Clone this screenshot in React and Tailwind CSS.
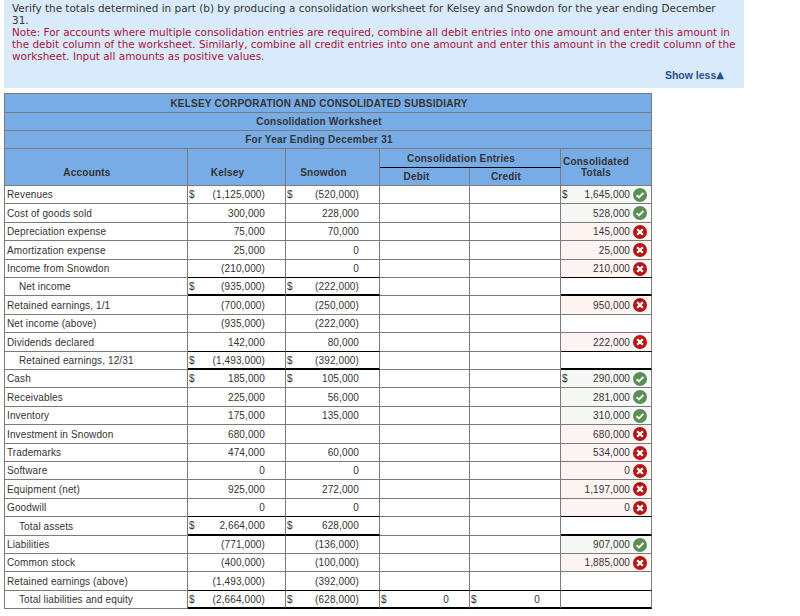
const rows = [
  { label: "Revenues", k: "(1,125,000)", s: "(520,000)", dollar: true, h: "h-[18px]", c: "1,645,000", cDollar: true, ok: true },
  { label: "Cost of goods sold", k: "300,000", s: "228,000", h: "h-[19px]", c: "528,000", ok: true },
  { label: "Depreciation expense", k: "75,000", s: "70,000", h: "h-[18px]", c: "145,000", ok: false },
  { label: "Amortization expense", k: "25,000", s: "0", h: "h-[19px]", c: "25,000", ok: false },
  { label: "Income from Snowdon", k: "(210,000)", s: "0", h: "h-[18px]", c: "210,000", ok: false },
  { label: "Net income", k: "(935,000)", s: "(222,000)", dollar: true, total: true, h: "h-[18px]" },
  { label: "Retained earnings, 1/1", k: "(700,000)", s: "(250,000)", h: "h-[19px]", c: "950,000", ok: false },
  { label: "Net income (above)", k: "(935,000)", s: "(222,000)", h: "h-[18px]" },
  { label: "Dividends declared", k: "142,000", s: "80,000", h: "h-[19px]", c: "222,000", ok: false },
  { label: "Retained earnings, 12/31", k: "(1,493,000)", s: "(392,000)", dollar: true, total: true, h: "h-[18px]" },
  { label: "Cash", k: "185,000", s: "105,000", dollar: true, h: "h-[18px]", c: "290,000", cDollar: true, ok: true },
  { label: "Receivables", k: "225,000", s: "56,000", h: "h-[19px]", c: "281,000", ok: true },
  { label: "Inventory", k: "175,000", s: "135,000", h: "h-[18px]", c: "310,000", ok: true },
  { label: "Investment in Snowdon", k: "680,000", s: "", h: "h-[19px]", c: "680,000", ok: false },
  { label: "Trademarks", k: "474,000", s: "60,000", h: "h-[18px]", c: "534,000", ok: false },
  { label: "Software", k: "0", s: "0", h: "h-[18px]", c: "0", ok: false },
  { label: "Equipment (net)", k: "925,000", s: "272,000", h: "h-[19px]", c: "1,197,000", ok: false },
  { label: "Goodwill", k: "0", s: "0", h: "h-[18px]", c: "0", ok: false },
  { label: "Total assets", k: "2,664,000", s: "628,000", dollar: true, total: true, h: "h-[19px]" },
  { label: "Liabilities", k: "(771,000)", s: "(136,000)", h: "h-[18px]", c: "907,000", ok: true },
  { label: "Common stock", k: "(400,000)", s: "(100,000)", h: "h-[18px]", c: "1,885,000", ok: false },
  { label: "Retained earnings (above)", k: "(1,493,000)", s: "(392,000)", h: "h-[19px]" },
  { label: "Total liabilities and equity", k: "(2,664,000)", s: "(628,000)", dollar: true, total: true, last: true, h: "h-[18px]" },
];

function StatusIcon({ ok }) {
  return (
    <svg viewBox="0 0 14 14" className="w-[14px] h-[14px] shrink-0">
      <circle cx="7" cy="7" r="7" fill={ok ? "#5c8f55" : "#b91414"} />
      {ok ? (
        <path d="M3.6 7.2 6 9.4 10.4 4.8" fill="none" stroke="#fff" strokeWidth="1.9" />
      ) : (
        <path d="M4.2 4.2 9.8 9.8M9.8 4.2 4.2 9.8" fill="none" stroke="#fff" strokeWidth="2.3" />
      )}
    </svg>
  );
}

function bottomLine(row, next) {
  if (row.total) return "border-b-2 border-b-black";
  if (next && next.total) return "border-b border-b-black";
  return "border-b border-b-[#7b7b7b]";
}

function entryLine(row, next) {
  if (row.last) return "border-b-2 border-b-black";
  if (next && next.last) return "border-b border-b-black";
  return "border-b border-b-[#7b7b7b]";
}

function MoneyCell({ value, dollar, line }) {
  return (
    <td className={`p-0 border-r border-r-[#7b7b7b] ${line}`}>
      <div className="flex justify-between pl-px pr-[20px]">
        <span>{dollar ? "$" : ""}</span>
        <span>{value}</span>
      </div>
    </td>
  );
}

export default function App() {
  return (
    <div className="w-[800px] h-[616px] bg-white overflow-hidden pl-1">
      <div className="w-[740px] h-[88px] bg-[#d9ebfa] pl-2 pr-1 pt-[2px] font-['DejaVu_Sans',sans-serif] text-[10.45px] leading-[12px] text-[#333]">
        <p className="pr-2">Verify the totals determined in part (b) by producing a consolidation worksheet for Kelsey and Snowdon for the year ending December 31.</p>
        <p className="text-[#a9123c]">Note: For accounts where multiple consolidation entries are required, combine all debit entries into one amount and enter this amount in the debit column of the worksheet. Similarly, combine all credit entries into one amount and enter this amount in the credit column of the worksheet. Input all amounts as positive values.</p>
        <div className="flex justify-end items-center mt-[7px] pr-[16px] font-['Liberation_Sans',sans-serif] font-bold text-[10.5px] text-[#27508f]">
          <span>Show less</span>
          <span className="font-['DejaVu_Sans',sans-serif] text-[10px] leading-none">▲</span>
        </div>
      </div>

      <table className="mt-[5px] w-[648px] table-fixed border-separate border-spacing-0 font-['Liberation_Sans',sans-serif] text-[10px] leading-[11px] tracking-[0.12px] text-[#333]">
        <colgroup>
          <col className="w-[184px]" />
          <col className="w-[98px]" />
          <col className="w-[94px]" />
          <col className="w-[90px]" />
          <col className="w-[91px]" />
          <col className="w-[91px]" />
        </colgroup>
        <thead className="font-bold tracking-[0.22px]">
          <tr className="h-[20px]">
            <th colSpan={6} className="p-0 pr-[18px] bg-[#78ace6] border border-[#7b7b7b] text-center font-bold">
              KELSEY CORPORATION AND CONSOLIDATED SUBSIDIARY
            </th>
          </tr>
          <tr className="h-[18px]">
            <th colSpan={6} className="p-0 pr-[18px] bg-[#78ace6] border-x border-b border-[#7b7b7b] text-center font-bold">
              Consolidation Worksheet
            </th>
          </tr>
          <tr className="h-[18px]">
            <th colSpan={6} className="p-0 pr-[18px] bg-[#78ace6] border-x border-b border-[#7b7b7b] text-center font-bold">
              For Year Ending December 31
            </th>
          </tr>
          <tr className="h-[19px]">
            <th rowSpan={2} className="p-0 pr-[18px] pb-[7px] align-bottom bg-[#78ace6] border-x border-b border-[#7b7b7b] font-bold">Accounts</th>
            <th rowSpan={2} className="p-0 pr-[18px] pb-[7px] align-bottom bg-[#78ace6] border-r border-b border-[#7b7b7b] font-bold">Kelsey</th>
            <th rowSpan={2} className="p-0 pr-[18px] pb-[7px] align-bottom bg-[#78ace6] border-r border-b border-[#7b7b7b] font-bold">Snowdon</th>
            <th colSpan={2} className="p-0 pr-[18px] bg-[#78ace6] border-r border-r-[#7b7b7b] border-b border-b-black font-bold">Consolidation Entries</th>
            <th rowSpan={2} className="p-0 pr-[20px] pb-[7px] align-bottom bg-[#78ace6] border-r border-b border-[#7b7b7b] font-bold">Consolidated<br />Totals</th>
          </tr>
          <tr className="h-[18px]">
            <th className="p-0 pr-[16px] bg-[#78ace6] border-r border-b border-[#7b7b7b] font-bold">Debit</th>
            <th className="p-0 pr-[18px] bg-[#78ace6] border-r border-b border-[#7b7b7b] font-bold">Credit</th>
          </tr>
        </thead>
        <tbody>
          {rows.map((row, i) => {
            const next = rows[i + 1];
            const line = bottomLine(row, next);
            const eLine = entryLine(row, next);
            return (
              <tr key={row.label} className={row.h}>
                <td className={`p-0 border-x border-x-[#7b7b7b] border-b border-b-[#7b7b7b] ${row.total ? "pl-[14px]" : "pl-[2px]"}`}>
                  {row.label}
                </td>
                <MoneyCell value={row.k} dollar={row.dollar} line={line} />
                <MoneyCell value={row.s} dollar={row.dollar} line={line} />
                {row.last ? (
                  <MoneyCell value="0" dollar line={eLine} />
                ) : (
                  <td className={`p-0 border-r border-r-[#7b7b7b] ${eLine}`}></td>
                )}
                {row.last ? (
                  <MoneyCell value="0" dollar line={eLine} />
                ) : (
                  <td className={`p-0 border-r border-r-[#7b7b7b] ${eLine}`}></td>
                )}
                <td className={`p-0 border-r border-r-[#7b7b7b] ${line} ${row.c ? (row.ok ? "bg-[#f5f8f5]" : "bg-[#fef5f3]") : ""}`}>
                  {row.c && (
                    <div className="flex items-center pl-px pr-[4px]">
                      <span>{row.cDollar ? "$" : ""}</span>
                      <span className="ml-auto mr-[3px]">{row.c}</span>
                      <StatusIcon ok={row.ok} />
                    </div>
                  )}
                </td>
              </tr>
            );
          })}
        </tbody>
      </table>
    </div>
  );
}
